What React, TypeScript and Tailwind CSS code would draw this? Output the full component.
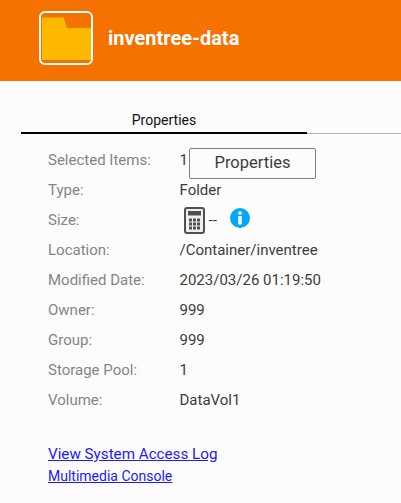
const rows = [
  { label: "Type:", value: "Folder" },
  { label: "Location:", value: "/Container/inventree" },
  { label: "Modified Date:", value: "2023/03/26 01:19:50" },
  { label: "Owner:", value: "999" },
  { label: "Group:", value: "999" },
  { label: "Storage Pool:", value: "1" },
  { label: "Volume:", value: "DataVol1" },
];

function Row({ label, children }: { label: string; children: React.ReactNode }) {
  return (
    <div className="h-[30px] flex items-center">
      <div className="w-[131.5px] text-[#858585]">{label}</div>
      <div className="flex-1 flex items-center text-[#3c3c3c]">{children}</div>
    </div>
  );
}

function FolderIcon() {
  return (
    <div className="w-[54px] h-[54px] border-2 border-white rounded-[6px] overflow-hidden">
      <svg width="50" height="50" viewBox="0 0 50 50">
        <path d="M1 4.5H22.5L26 15H50V47H1Z" fill="#ffb800" />
      </svg>
    </div>
  );
}

function CalcIcon() {
  return (
    <svg width="21" height="27" viewBox="0 0 21 27">
      <rect x="1" y="1" width="19" height="25" rx="2" fill="#efefef" stroke="#505050" strokeWidth="2" />
      <rect x="4" y="4" width="13" height="4.5" fill="#505050" />
      {[11.5, 15.5, 19.5].map((y) =>
        [5, 9, 13].map((x) => (
          <rect key={`${x}-${y}`} x={x} y={y} width="3" height="3" fill="#505050" />
        )),
      )}
    </svg>
  );
}

function InfoIcon() {
  return (
    <svg width="20" height="20" viewBox="0 0 20 20">
      <circle cx="10" cy="10" r="10" fill="#03a9f4" />
      <rect x="8.3" y="3.5" width="3.4" height="3" fill="#fff" />
      <rect x="8.3" y="8" width="3.4" height="8.5" fill="#fff" />
    </svg>
  );
}

export default function App() {
  return (
    <div className="w-[401px] h-[503px] overflow-hidden bg-[#fcfcfc] font-['Roboto',sans-serif] text-[15px]">
      <div className="h-[81px] bg-[#f57200] flex items-center pl-[39px] pb-[5px]">
        <FolderIcon />
        <div className="ml-[15px] text-white text-[20px] font-bold">inventree-data</div>
      </div>

      <div className="mt-[29px] ml-[21px] flex items-end">
        <div className="w-[286px] h-[24px] border-b-2 border-black text-center text-[14px] leading-[20px] text-[#111111]">
          Properties
        </div>
        <div className="flex-1 border-b border-[#b3b3b3]"></div>
      </div>

      <div className="mt-[11px] pl-[48px]">
        <Row label="Selected Items:">
          1
          <button className="ml-[1px] w-[127px] h-[31px] mt-[6px] border border-[#808080] rounded-[2px] bg-[#fcfcfc] text-[16.5px] text-[#3c3c3c]">
            Properties
          </button>
        </Row>
        <Row label={rows[0].label}>{rows[0].value}</Row>
        <Row label="Size:">
          <span className="ml-[4px]"><CalcIcon /></span>
          <span className="ml-[4px]">--</span>
          <span className="ml-[13px] mb-[4px]"><InfoIcon /></span>
        </Row>
        {rows.slice(1).map((r) => (
          <Row key={r.label} label={r.label}>{r.value}</Row>
        ))}
      </div>

      <div className="mt-[28px] pl-[48px] text-[#1a1aff]">
        <div className="h-[22px] leading-[22px] text-[15.2px] underline">View System Access Log</div>
        <div className="h-[22px] leading-[22px] text-[14px] underline">Multimedia Console</div>
      </div>
    </div>
  );
}
